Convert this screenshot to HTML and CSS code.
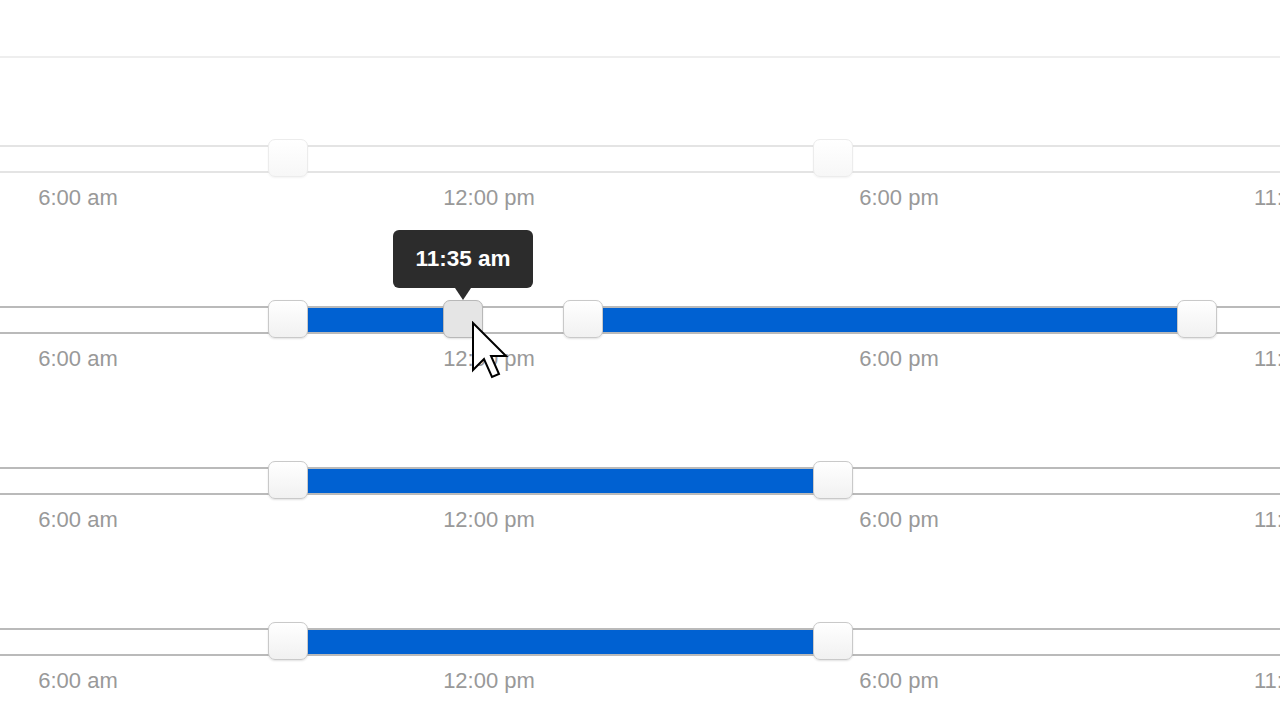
FILE: index.html
```html
<!DOCTYPE html>
<html lang="en">
<head>
    <meta charset="UTF-8">
    <meta name="viewport" content="width=device-width, initial-scale=1.0">
    <title>Time range sliders</title>
    <link rel="stylesheet" href="styles.css">
</head>
<body>
    <div class="top-bar"></div>
    <div class="sliders">
        <!-- disabled slider -->
        <div class="row disabled">
            <div class="track"></div>
            <div class="handle" style="left: 268px"></div>
            <div class="handle" style="left: 813px"></div>
            <div class="labels">
                <span>6:00 am</span>
                <span>12:00 pm</span>
                <span>6:00 pm</span>
                <span>11:59 pm</span>
            </div>
        </div>
        <div class="row">
            <div class="track"></div>
            <div class="range" style="left: 287px; width: 176px"></div>
            <div class="range" style="left: 583px; width: 614px"></div>
            <div class="handle" style="left: 268px"></div>
            <div class="handle active" style="left: 443px">
                <div class="tooltip">11:35 am</div>
            </div>
            <div class="handle" style="left: 563px"></div>
            <div class="handle" style="left: 1177px"></div>
            <div class="labels">
                <span>6:00 am</span>
                <span>12:00 pm</span>
                <span>6:00 pm</span>
                <span>11:59 pm</span>
            </div>
            <svg class="cursor" width="40" height="60" viewBox="0 0 40 60">
                <polygon points="2,2 2,49 13,38 21,56 28,53 20,35 35,35" fill="#fff" stroke="#000" stroke-width="2" stroke-linejoin="miter"/>
            </svg>
        </div>
        <div class="row">
            <div class="track"></div>
            <div class="range" style="left: 287px; width: 545px"></div>
            <div class="handle" style="left: 268px"></div>
            <div class="handle" style="left: 813px"></div>
            <div class="labels">
                <span>6:00 am</span>
                <span>12:00 pm</span>
                <span>6:00 pm</span>
                <span>11:59 pm</span>
            </div>
        </div>
        <div class="row">
            <div class="track"></div>
            <div class="range" style="left: 287px; width: 545px"></div>
            <div class="handle" style="left: 268px"></div>
            <div class="handle" style="left: 813px"></div>
            <div class="labels">
                <span>6:00 am</span>
                <span>12:00 pm</span>
                <span>6:00 pm</span>
                <span>11:59 pm</span>
            </div>
        </div>
    </div>
</body>
</html>
```

FILE: styles.css
```css
body {
    font-family: 'Liberation Sans', Arial, sans-serif;
    background: #fff;
    margin: 0;
    padding: 0;
    width: 1280px;
    height: 720px;
    overflow: hidden;
    color: #999;
}
.top-bar {
    height: 56px;
    border-bottom: 2px solid #eeeeee;
}
.sliders {
    display: flex;
    flex-direction: column;
    gap: 95px;
    padding-top: 87px;
}
.row {
    position: relative;
}
.track {
    height: 24px;
    margin: 0 -20px;
    border-top: 2px solid #bababa;
    border-bottom: 2px solid #bababa;
    background: #fff;
}
.row.disabled .track {
    border-color: #e4e4e4;
}
.range {
    position: absolute;
    top: 2px;
    height: 24px;
    background: #0061d2;
}
.handle {
    position: absolute;
    top: -6px;
    width: 38px;
    height: 36px;
    border: 1px solid #c9c9c9;
    border-radius: 7px;
    background: linear-gradient(#ffffff, #f1f1f1);
    box-shadow: 0 1px 2px rgba(0, 0, 0, 0.12);
}
.row.disabled .handle {
    border-color: #ececec;
    background: linear-gradient(#ffffff, #f7f7f7);
    box-shadow: 0 1px 2px rgba(0, 0, 0, 0.05);
}
.handle.active {
    background: #e5e5e5;
    border-color: #b8b8b8;
}
.tooltip {
    position: absolute;
    left: 50%;
    bottom: 49px;
    transform: translateX(-50%);
    width: 140px;
    height: 58px;
    line-height: 57px;
    background: #2c2c2c;
    color: #fff;
    font-size: 22.5px;
    font-weight: bold;
    text-align: center;
    border-radius: 6px;
    white-space: nowrap;
}
.tooltip::after {
    content: '';
    position: absolute;
    left: 50%;
    top: 100%;
    margin-left: -8px;
    border-left: 8px solid transparent;
    border-right: 8px solid transparent;
    border-top: 12px solid #2c2c2c;
}
.labels {
    display: grid;
    grid-template-columns: 412px 410px 410px 390px;
    margin-left: -128px;
    margin-top: 12px;
    font-size: 22px;
    line-height: 26px;
    text-align: center;
    white-space: nowrap;
    color: #999;
}
.cursor {
    position: absolute;
    left: 471px;
    top: 15px;
}
```
